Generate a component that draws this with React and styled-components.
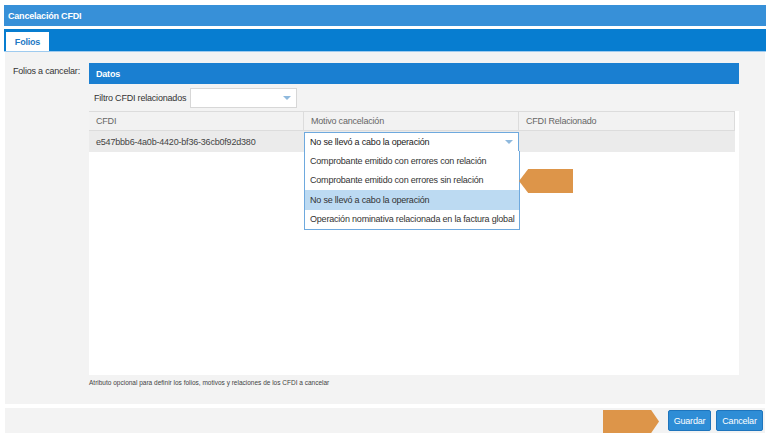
import React from 'react';
import styled, { createGlobalStyle } from 'styled-components';

const Global = createGlobalStyle`
  html, body { margin: 0; padding: 0; background: #fff; }
  body {
    font-family: "Liberation Sans", Arial, sans-serif;
    font-size: 9px;
    letter-spacing: -0.2px;
    color: #333;
  }
`;

const Page = styled.div`
  width: 768px;
  height: 439px;
  padding: 5px 2px 0 4px;
  box-sizing: border-box;
  display: flex;
  flex-direction: column;
`;

const TitleBar = styled.div`
  height: 21px;
  background: #3790d8;
  color: #fff;
  font-weight: bold;
  display: flex;
  align-items: center;
  padding-left: 4px;
`;

const TabBar = styled.div`
  margin-top: 3px;
  height: 22px;
  background: #077dd0;
  border-bottom: 1px solid #9fcbef;
  display: flex;
  align-items: flex-end;
  padding-left: 2px;
`;

const Tab = styled.div`
  width: 43px;
  height: 19px;
  background: #fff;
  color: #1d78c4;
  font-weight: bold;
  display: flex;
  align-items: center;
  justify-content: center;
`;

const Content = styled.div`
  margin: 0 1px;
  height: 352px;
  background: #f3f3f3;
  display: flex;
  padding: 11px 26px 0 8px;
  box-sizing: border-box;
`;

const SideLabel = styled.div`
  width: 76px;
  padding-top: 3px;
  white-space: nowrap;
`;

const Panel = styled.div`
  width: 650px;
  display: flex;
  flex-direction: column;
`;

const PanelHeader = styled.div`
  height: 21px;
  background: #1a7fd1;
  color: #fff;
  font-weight: bold;
  display: flex;
  align-items: center;
  padding-left: 7px;
`;

const FilterRow = styled.div`
  height: 23px;
  display: flex;
  align-items: center;
  gap: 4px;
  padding-left: 5px;
  margin-top: 2px;
`;

const Select = styled.div`
  width: ${p => p.$w}px;
  height: ${p => p.$h}px;
  box-sizing: border-box;
  background: #fff;
  border: 1px solid ${p => (p.$focus ? '#6ea9de' : '#d7d7d7')};
  display: flex;
  align-items: center;
  justify-content: space-between;
  padding: 0 5px;
  color: #222;
`;

const Caret = styled.span`
  width: 0;
  height: 0;
  border-left: 4px solid transparent;
  border-right: 4px solid transparent;
  border-top: 4px solid #8fb9dd;
`;

const Table = styled.div`
  position: relative;
  margin-top: 2px;
  width: 650px;
  height: 264px;
  background: #fff;
`;

const HeadRow = styled.div`
  display: grid;
  grid-template-columns: 215px 215px 216px;
  width: 646px;
  height: 20px;
  background: #f2f2f2;
  border-top: 1px solid #dcdcdc;
  border-bottom: 1px solid #dcdcdc;
  box-sizing: border-box;
`;

const HeadCell = styled.div`
  display: flex;
  align-items: center;
  padding-left: 7px;
  color: #666;
  border-right: 1px solid #dcdcdc;
`;

const BodyRow = styled.div`
  display: grid;
  grid-template-columns: 215px 215px 216px;
  width: 646px;
  height: 21px;
  background: #ebebeb;
`;

const Cell = styled.div`
  display: flex;
  align-items: center;
  padding-left: ${p => (p.$flush ? 0 : 7)}px;
  color: #444;
`;

const OptionList = styled.div`
  position: absolute;
  left: 215px;
  top: 40px;
  width: 216px;
  box-sizing: border-box;
  border: 1px solid #6ea9de;
  border-top: none;
  background: #fff;
`;

const Option = styled.div`
  height: 19.5px;
  display: flex;
  align-items: center;
  padding-left: 5px;
  white-space: nowrap;
  color: #333;
  background: ${p => (p.$active ? '#bcdaf2' : '#fff')};
`;

const Pointer = styled.div`
  position: absolute;
  width: ${p => p.$w}px;
  height: ${p => p.$h}px;
  background: #dd9549;
  clip-path: ${p =>
    p.$dir === 'left'
      ? 'polygon(0 50%, 17% 0, 100% 0, 100% 100%, 17% 100%)'
      : 'polygon(0 0, 86% 0, 100% 50%, 86% 100%, 0 100%)'};
`;

const Note = styled.div`
  font-size: 6.5px;
  letter-spacing: 0;
  color: #444;
  margin-top: 4px;
`;

const Footer = styled.div`
  position: relative;
  margin: 4px 1px 0;
  height: 25px;
  background: #f3f3f3;
  display: flex;
  justify-content: flex-end;
  align-items: center;
  gap: 5px;
  padding-right: 2px;
`;

const Button = styled.button`
  width: ${p => p.$w}px;
  height: 21px;
  padding: 0;
  background: #2e8dd6;
  border: 1px solid #1e75bd;
  border-radius: 2px;
  color: #fff;
  font-family: inherit;
  font-size: 9px;
  letter-spacing: -0.2px;
`;

const options = [
  'Comprobante emitido con errores con relación',
  'Comprobante emitido con errores sin relación',
  'No se llevó a cabo la operación',
  'Operación nominativa relacionada en la factura global',
];

export default function App() {
  return (
    <>
      <Global />
      <Page>
        <TitleBar>Cancelación CFDI</TitleBar>
        <TabBar>
          <Tab>Folios</Tab>
        </TabBar>
        <Content>
          <SideLabel>Folios a cancelar:</SideLabel>
          <Panel>
            <PanelHeader>Datos</PanelHeader>
            <FilterRow>
              Filtro CFDI relacionados
              <Select $w={107} $h={20}>
                <span />
                <Caret />
              </Select>
            </FilterRow>
            <Table>
              <HeadRow>
                <HeadCell>CFDI</HeadCell>
                <HeadCell>Motivo cancelación</HeadCell>
                <HeadCell>CFDI Relacionado</HeadCell>
              </HeadRow>
              <BodyRow>
                <Cell>e547bbb6-4a0b-4420-bf36-36cb0f92d380</Cell>
                <Cell $flush>
                  <Select $w={216} $h={20} $focus>
                    No se llevó a cabo la operación
                    <Caret />
                  </Select>
                </Cell>
                <Cell />
              </BodyRow>
              <OptionList>
                {options.map((o, i) => (
                  <Option key={o} $active={i === 2}>
                    {o}
                  </Option>
                ))}
              </OptionList>
              <Pointer $dir="left" $w={54} $h={24} style={{ left: 430, top: 58 }} />
            </Table>
            <Note>Atributo opcional para definir los folios, motivos y relaciones de los CFDI a cancelar</Note>
          </Panel>
        </Content>
        <Footer>
          <Pointer $dir="right" $w={56} $h={23} style={{ left: 598, top: 2 }} />
          <Button $w={43}>Guardar</Button>
          <Button $w={47}>Cancelar</Button>
        </Footer>
      </Page>
    </>
  );
}
